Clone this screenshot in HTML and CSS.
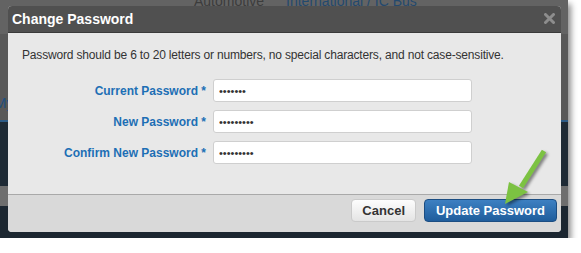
FILE: index.html
```html
<!DOCTYPE html>
<html>
  <head>
    <title>Change Password</title>
    <meta charset='utf-8'>
    <link rel="stylesheet" href="styles.css">
  </head>
  <body>
    <div id='shot'>
      <!-- page behind the overlay -->
      <div class='page'>
        <div class='nav'>
          <span class='nav-item'>Automotive</span>
          <span class='nav-item nav-link'>International / IC Bus</span>
        </div>
        <div class='band band-grey'><span class='my'>My</span></div>
        <div class='band band-navy'></div>
        <div class='band band-light'></div>
        <div class='band band-navy2'></div>
      </div>

      <div class='modal'>
        <div class='modal-title'>
          <span>Change Password</span>
          <svg class='close' width='11' height='11' viewBox='0 0 11 11'>
            <path d='M1.5 1.5 L9.5 9.5 M9.5 1.5 L1.5 9.5' stroke='#8d8d8d' stroke-width='3' stroke-linecap='round'/>
          </svg>
        </div>
        <div class='modal-body'>
          <p class='hint'>Password should be 6 to 20 letters or numbers, no special characters, and not case-sensitive.</p>
          <div class='form'>
            <label for='cur'>Current Password *</label>
            <input id='cur' type='password' value='1234567'>
            <label for='new'>New Password *</label>
            <input id='new' type='password' value='123456789'>
            <label for='conf'>Confirm New Password *</label>
            <input id='conf' type='password' value='123456789'>
          </div>
        </div>
        <div class='modal-footer'>
          <button class='btn'>Cancel</button>
          <button class='btn btn-primary'>Update Password</button>
        </div>
      </div>
    </div>

    <svg class='arrow' width='60' height='70' viewBox='0 0 60 70'>
      <g>
        <line x1='48' y1='8' x2='25' y2='44' stroke='#7cc242' stroke-width='5'/>
        <polygon points='9,61 13,39 32,49' fill='#7cc242'/>
      </g>
    </svg>
  </body>
</html>
```

FILE: styles.css
```css
body {
  font-family: Arial, "Liberation Sans", Helvetica, sans-serif;
  background: #fff;
  margin: 0;
  padding: 0;
}

#shot {
  position: relative;
  width: 568px;
  height: 238px;
  overflow: hidden;
  box-shadow: 3px 4px 6px rgba(0, 0, 0, 0.45);
}

/* The page under the dark overlay. */
.page {
  height: 100%;
  display: flex;
  flex-direction: column;
  background: #5c5c5c;
}
.nav {
  height: 38px;
  background: #636363;
  font-size: 14px;
  line-height: 10px;
  padding-left: 194px;
  display: flex;
  gap: 22px;
  align-items: flex-start;
  margin-top: -4px;
}
.nav-item { color: #3c3c3c; }
.nav-link { color: #23496e; }
.band-grey {
  height: 86px;
  background: #585858;
  position: relative;
}
.my {
  position: absolute;
  left: -6px;
  top: 60px;
  color: #1f4f7f;
  font-size: 15px;
}
.band-navy {
  height: 64px;
  background: #1e2a35;
  border-top: 2px solid #2d5b86;
}
.band-light {
  height: 20px;
  background: #6e6e6e;
}
.band-navy2 {
  flex: 1;
  background: #1c2731;
}

/* Dialog. */
.modal {
  position: absolute;
  left: 8px;
  top: 6px;
  width: 553px;
  height: 226px;
  background: #e8e8e8;
  border-radius: 4px;
  display: flex;
  flex-direction: column;
  overflow: hidden;
}
.modal-title {
  height: 26px;
  background: #505050;
  border-bottom: 1px solid #3a3a3a;
  color: #fff;
  font-weight: bold;
  font-size: 14px;
  display: flex;
  align-items: center;
  justify-content: space-between;
  padding: 0 6px 0 4px;
}
.close { margin-top: -2px; }
.modal-body {
  flex: 1;
  padding: 15px 14px 0 14px;
}
.hint {
  margin: 0;
  font-size: 12px;
  letter-spacing: -0.17px;
  color: #333;
}
.form {
  display: grid;
  grid-template-columns: 184px 259px;
  column-gap: 7px;
  row-gap: 8px;
  margin-top: 17px;
  align-items: center;
}
.form label {
  text-align: right;
  color: #1d6fb5;
  font-size: 12px;
  font-weight: bold;
}
.form input {
  box-sizing: border-box;
  height: 23px;
  margin: 0;
  padding: 0 5px;
  border: 1px solid #cfcfcf;
  border-radius: 3px;
  background: #fff;
  font-size: 11px;
  color: #333;
}
.modal-footer {
  height: 38px;
  background: #d9d9d9;
  border-top: 1px solid #a9a9a9;
  display: flex;
  justify-content: flex-end;
  align-items: flex-start;
  gap: 8px;
  padding: 4px 4px 0 0;
  box-sizing: border-box;
}
.btn {
  height: 23px;
  padding: 0 10px;
  white-space: nowrap;
  font-family: Arial, "Liberation Sans", Helvetica, sans-serif;
  font-size: 13px;
  font-weight: bold;
  color: #333;
  background: linear-gradient(#fdfdfd, #e4e4e4);
  border: 1px solid #cacaca;
  border-radius: 4px;
}
.btn-primary {
  width: 133px;
  padding: 0;
  color: #fff;
  background: linear-gradient(#3d80c2, #1f5d9c);
  border-color: #1b4d82;
}

.arrow {
  position: absolute;
  left: 496px;
  top: 143px;
  filter: drop-shadow(2px 2px 1.5px rgba(0, 0, 0, 0.45));
}
```
